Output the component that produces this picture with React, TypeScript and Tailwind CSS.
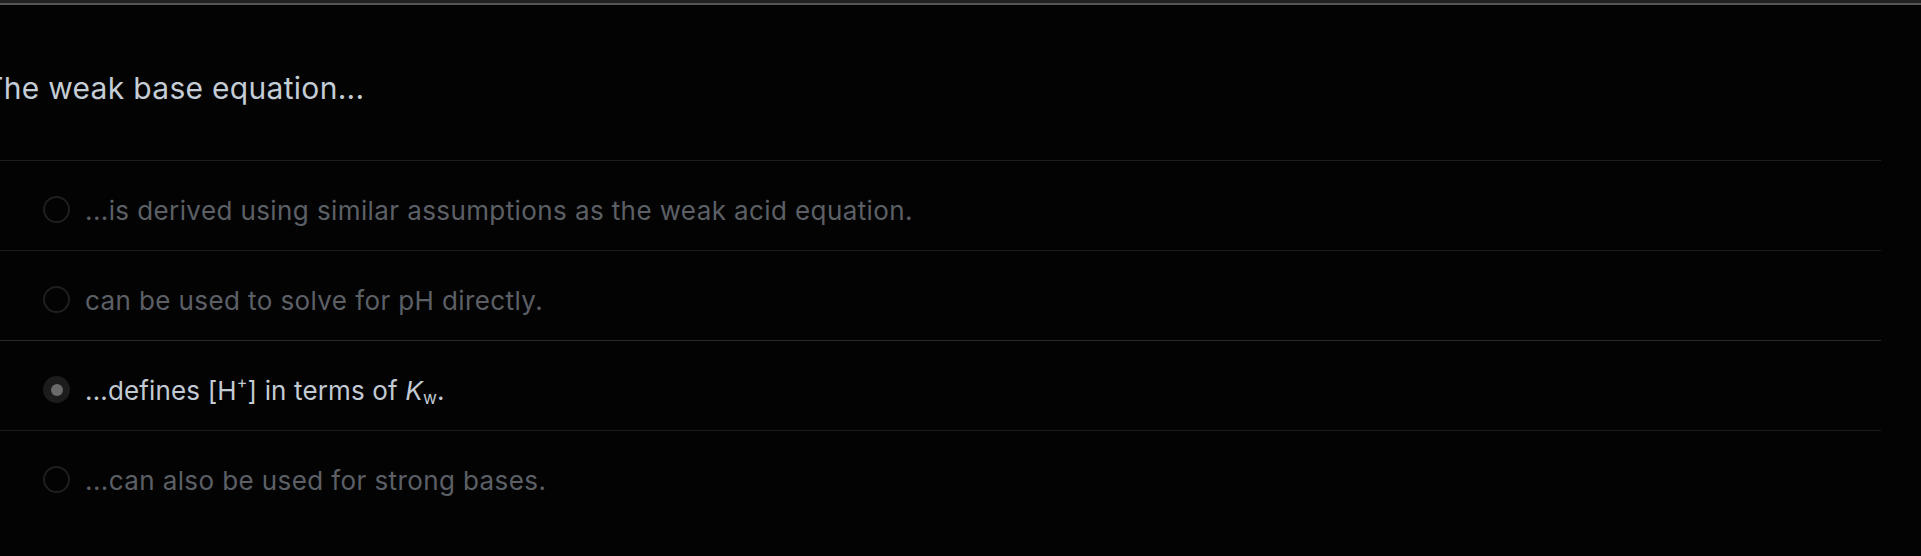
import React from "react";

const font = { fontFamily: "Inter, 'Noto Sans', sans-serif" };

function Radio({ selected }: { selected?: boolean }) {
  if (selected) {
    return (
      <span className="flex h-[27px] w-[27px] shrink-0 items-center justify-center rounded-full bg-[#1c1c1c]">
        <span className="h-[12px] w-[12px] rounded-full bg-[#6a6a6a]" />
      </span>
    );
  }
  return <span className="h-[27px] w-[27px] shrink-0 rounded-full border-2 border-[#1f1f1f]" />;
}

function Row({
  selected,
  children,
  borderClass,
}: {
  selected?: boolean;
  children: React.ReactNode;
  borderClass: string;
}) {
  return (
    <div className={`flex h-[90px] items-center gap-[15px] pl-[43px] pt-[8px] border-t ${borderClass}`}>
      <Radio selected={selected} />
      <span
        className={`text-[26px] leading-none pt-[2px] ${
          selected ? "tracking-[0.15px] text-[#c2cad4]" : "tracking-[0.4px] text-[#5c6066]"
        }`}
      >
        {children}
      </span>
    </div>
  );
}

export default function App() {
  return (
    <div className="h-[556px] w-[1921px] overflow-hidden bg-[#030303]" style={font}>
      <div className="h-[3px] bg-[#222222]" />
      <div className="h-[2px] bg-[#555555]" />
      <div className="h-[155px] pt-[68px]">
        <h1 className="-ml-[16px] text-[30px] font-normal leading-none tracking-[0.3px] text-[#c4ccd6]">
          The weak base equation...
        </h1>
      </div>
      <div className="w-[1881px]">
        <Row borderClass="border-[#1c1c1c]">
          ...is derived using similar assumptions as the weak acid equation.
        </Row>
        <Row borderClass="border-[#1a1a1a]">can be used to solve for pH directly.</Row>
        <Row selected borderClass="border-[#2a2a2a]">
          ...defines [H<sup className="text-[16px] -top-[0.7em]">+</sup>] in terms of <i>K</i>
          <sub className="text-[17px]">w</sub>.
        </Row>
        <Row borderClass="border-[#1a1a1a]">...can also be used for strong bases.</Row>
      </div>
    </div>
  );
}
